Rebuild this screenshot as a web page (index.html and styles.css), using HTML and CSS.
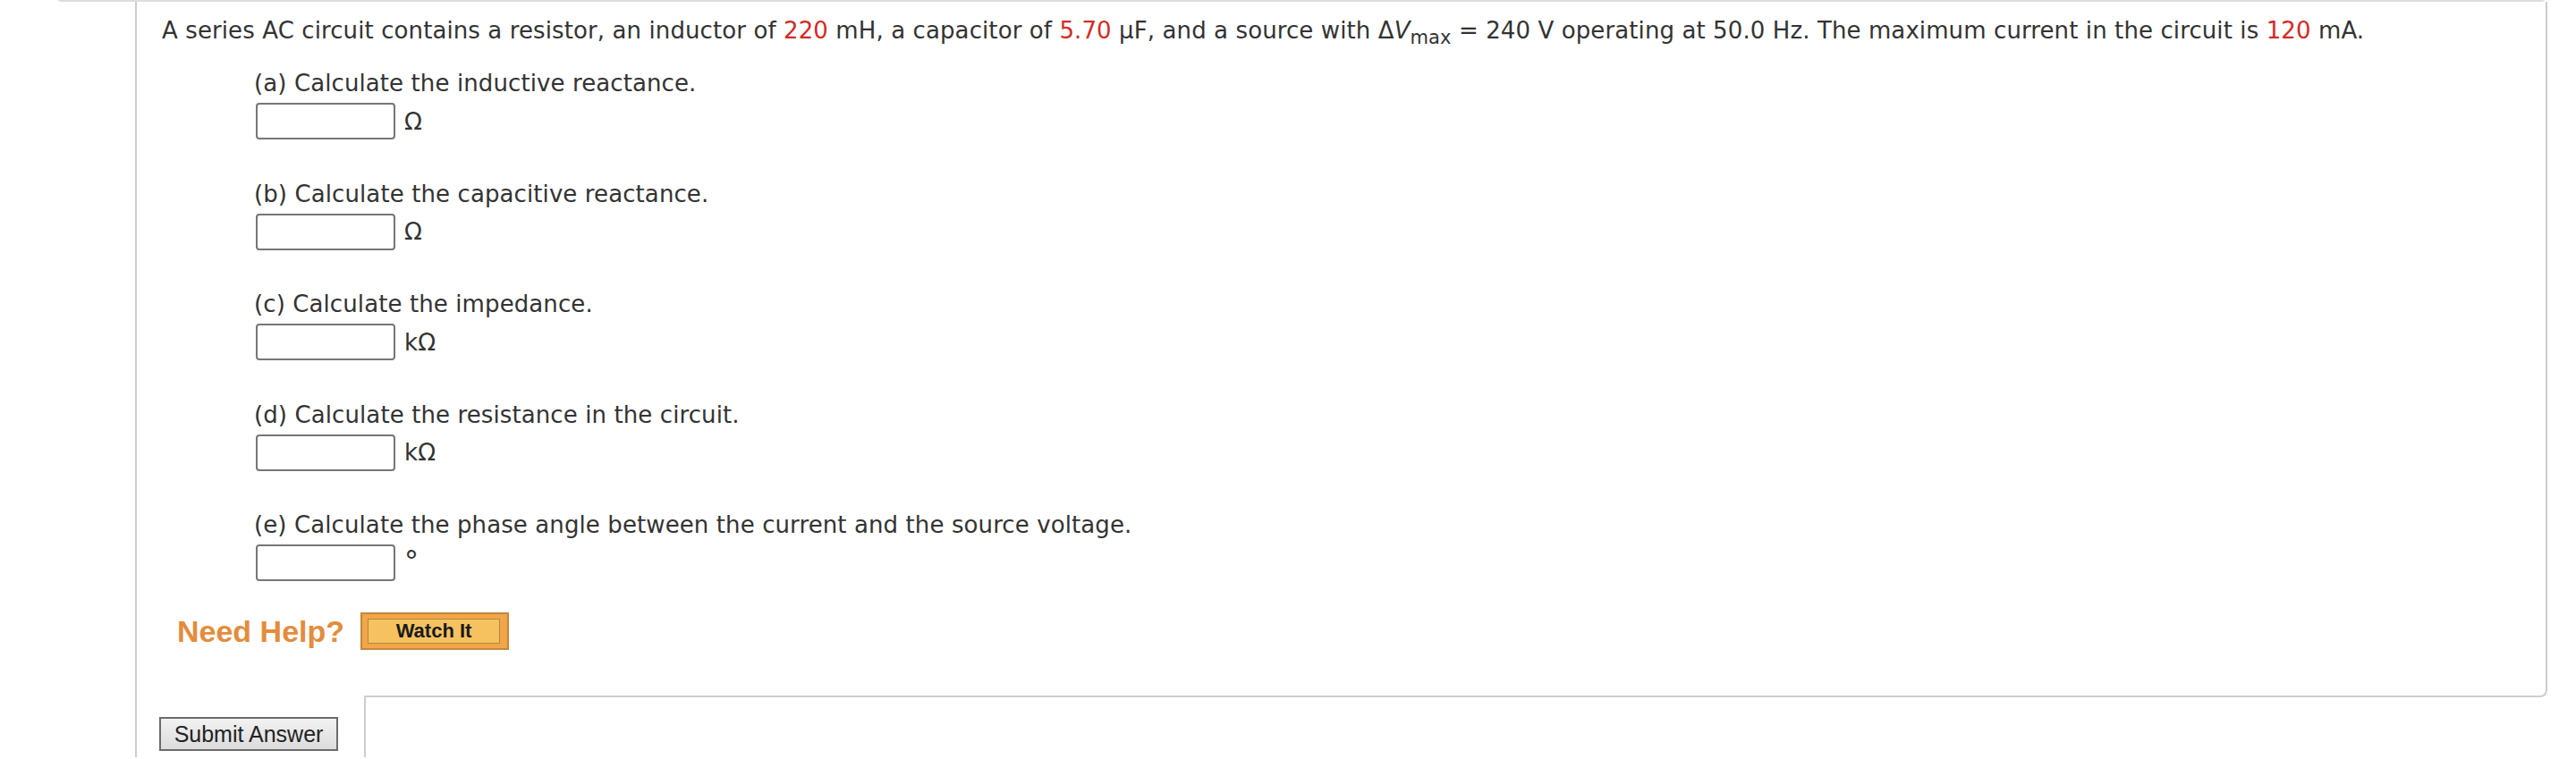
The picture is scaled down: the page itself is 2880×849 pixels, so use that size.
FILE: index.html
```html
<!DOCTYPE html>
<html>
<head>
    <meta charset="UTF-8">
    <title>Series AC circuit</title>
    <link rel="stylesheet" href="styles.css">
</head>
<body>
    <div class="prev"></div>
    <div class="container">
        <div class="question">
            <p class="stem">A series AC circuit contains a resistor, an inductor of <span class="red">220</span> mH, a capacitor of <span class="red">5.70</span> μF, and a source with Δ<i>V</i><sub>max</sub> = 240 V operating at 50.0 Hz. The maximum current in the circuit is <span class="red">120</span> mA.</p>

            <ol class="parts">
                <li class="part">
                    <p class="label">(a) Calculate the inductive reactance.</p>
                    <div class="entry"><input class="answer" type="text"><span class="unit">Ω</span></div>
                </li>
                <li class="part">
                    <p class="label">(b) Calculate the capacitive reactance.</p>
                    <div class="entry"><input class="answer" type="text"><span class="unit">Ω</span></div>
                </li>
                <li class="part">
                    <p class="label">(c) Calculate the impedance.</p>
                    <div class="entry"><input class="answer" type="text"><span class="unit">kΩ</span></div>
                </li>
                <li class="part">
                    <p class="label">(d) Calculate the resistance in the circuit.</p>
                    <div class="entry"><input class="answer" type="text"><span class="unit">kΩ</span></div>
                </li>
                <li class="part">
                    <p class="label">(e) Calculate the phase angle between the current and the source voltage.</p>
                    <div class="entry"><input class="answer" type="text"><span class="unit degree">°</span></div>
                </li>
            </ol>

            <div class="help">
                <span class="help-text">Need Help?</span>
                <button class="watch" type="button"><span class="watch-inner">Watch It</span></button>
            </div>
        </div>

        <div class="footer">
            <div class="submit-cell">
                <button class="submit" type="button">Submit Answer</button>
            </div>
            <div class="feedback"></div>
        </div>
    </div>
</body>
</html>
```

FILE: styles.css
```css
* {
    margin: 0;
    padding: 0;
    list-style: none;
    box-sizing: border-box;
}

body {
    background-color: #fff;
    font-family: "DejaVu Sans", Verdana, sans-serif;
    font-size: 26px;
    line-height: 30px;
    letter-spacing: 0.1px;
    color: #333;
}

/* bottom edge of the previous question box */
.prev {
    height: 10px;
    margin: -8px 32px 0 62px;
    border: 2px solid #ddd;
    border-top: none;
    border-radius: 0 0 7px 7px;
}

.container {
    margin: 0 32px 0 151px;
    border-left: 2px solid #cdcdcd;
}

.question {
    position: relative;
    padding: 17px 0 53px 28px;
}

/* right edge and the part of the bottom edge right of the submit cell */
.question::after {
    content: "";
    position: absolute;
    top: 0;
    right: 0;
    bottom: 0;
    left: 254px;
    border-right: 2px solid #cdcdcd;
    border-bottom: 2px solid #cdcdcd;
    border-bottom-right-radius: 8px;
    pointer-events: none;
}

.stem {
    white-space: nowrap;
}

.red {
    color: #d32b25;
}

.stem i {
    font-style: italic;
}

.stem sub {
    font-size: 21px;
    line-height: 0;
    vertical-align: -6px;
}

.parts {
    display: flex;
    flex-direction: column;
    gap: 45.5px;
    margin: 29px 0 0 103px;
}

.entry {
    display: flex;
    align-items: center;
    margin-top: 7px;
}

.answer {
    width: 156px;
    height: 41px;
    margin-left: 2px;
    border: 2px solid #767676;
    border-radius: 4px;
    background: #fff;
    font: inherit;
}

.unit {
    margin-left: 10px;
}

.degree {
    font-size: 32px;
    margin-top: -4px;
}

.help {
    display: flex;
    align-items: center;
    gap: 18px;
    margin: 35px 0 0 17px;
}

.help-text {
    font-family: "Liberation Sans", Arial, sans-serif;
    font-weight: bold;
    font-size: 34px;
    line-height: 40px;
    letter-spacing: 0;
    color: #e48c3c;
}

.watch {
    width: 166px;
    height: 42px;
    padding: 5px 8px 5px 6px;
    border: 2px solid #c3873d;
    background: #f1a64a;
    cursor: pointer;
}

.watch-inner {
    display: flex;
    align-items: center;
    justify-content: center;
    height: 100%;
    border: 1px solid #b7843f;
    background: #f6c260;
    font-family: "Liberation Sans", Arial, sans-serif;
    font-weight: bold;
    font-size: 22px;
    letter-spacing: 0;
    color: #1a1a1a;
}

.footer {
    display: flex;
}

.submit-cell {
    width: 254px;
    padding: 22px 0 0 25px;
}

.submit {
    width: 200px;
    height: 38px;
    border: 2px solid #6b6b6b;
    background: linear-gradient(#f2f2f2, #dcdcdc);
    font-family: "Liberation Sans", Arial, sans-serif;
    font-size: 25px;
    letter-spacing: 0;
    color: #222;
}

.feedback {
    flex: 1;
    height: 67px;
    border-left: 2px solid #cdcdcd;
}
```
